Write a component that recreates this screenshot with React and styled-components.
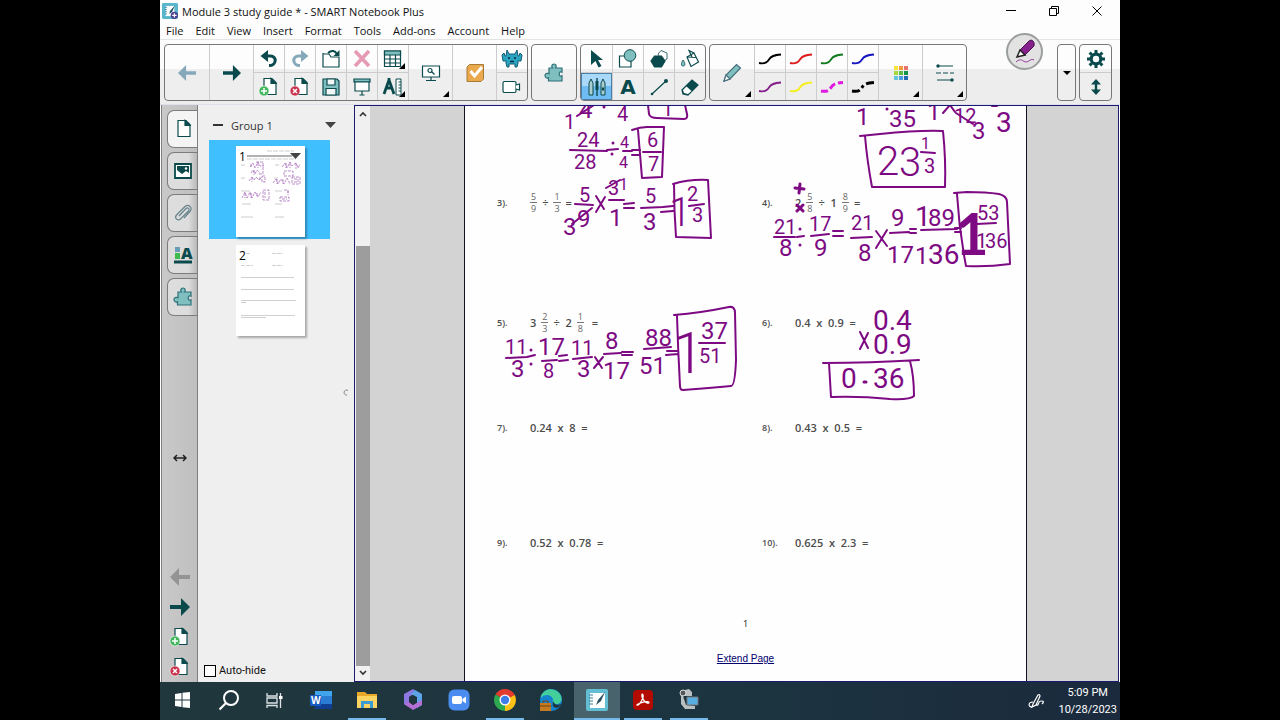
import React from 'react';
import styled, { createGlobalStyle, css } from 'styled-components';

const GlobalStyle = createGlobalStyle`
  * {
    box-sizing: border-box;
  }

  body {
    margin: 0;
    background: #000000;
    font-family: 'Open Sans', 'Noto Sans', sans-serif;
    font-size: 11px;
    color: #111111;
  }

  button {
    font: inherit;
    color: inherit;
    border: 0;
    padding: 0;
    background: none;
  }
`;

const Screen = styled.div`
  width: 75%;
  height: 100vh;
  margin: 0 auto;
  display: flex;
  flex-direction: column;
  background: #fdfdfd;
  overflow: hidden;
`;

const TitleBar = styled.header`
  display: flex;
  align-items: center;
  height: 22px;
  padding: 0 16px 0 2px;
  gap: 4px;
  flex: none;
`;

const Title = styled.h1`
  flex: 1;
  margin: 0;
  font-size: 11px;
  font-weight: 400;
  white-space: nowrap;
`;

const WindowButtons = styled.div`
  display: flex;
  gap: 28px;
`;

const WindowButton = styled.button`
  display: flex;
  width: 15px;
  height: 16px;
  align-items: center;
  justify-content: center;
`;

const MenuBar = styled.nav`
  display: flex;
  flex: none;
  height: 18px;
  padding-left: 6px;
  gap: 12px;
  border-bottom: 1px solid #e4e4e4;
`;

const MenuItem = styled.button`
  line-height: 17px;
  height: 17px;
`;

const Toolbar = styled.div`
  position: relative;
  display: flex;
  flex: none;
  gap: 3px;
  height: 65px;
  padding: 4px 8px 3px 4px;
  background: linear-gradient(#fcfcfc 29px, #ededed 29px);
  border-bottom: 1px solid #dedeee;
`;

const Group = styled.div`
  display: flex;
  border: 1px solid #777777;
  border-radius: 4px;
  background: linear-gradient(#fdfdfd 24px, #eeeeee 24px);
  overflow: hidden;
`;

const Pair = styled.div`
  display: flex;
  flex-direction: column;
  width: 31px;
  div + &,
  button + & {
    border-left: 1px solid #cccccc;
  }
`;

const ToolButton = styled.button`
  position: relative;
  display: flex;
  flex: 1;
  align-items: center;
  justify-content: center;
  & + & {
    border-top: 1px solid #cccccc;
  }
  ${(p) =>
    p.$active &&
    css`
      background: linear-gradient(#a9d8fa 50%, #6ebcf3 50%);
      box-shadow: inset 0 0 0 1px #4a7fa8;
    `}
`;

const WideButton = styled.button`
  position: relative;
  display: flex;
  width: 44px;
  align-items: center;
  justify-content: center;
  & + &,
  div + & {
    border-left: 1px solid #cccccc;
  }
`;

const Corner = styled.span`
  position: absolute;
  right: 3px;
  bottom: 3px;
  border: 3px solid #000000;
  border-top-color: transparent;
  border-left-color: transparent;
`;

const Spacer = styled.div`
  flex: 1;
`;

const Narrow = styled(WideButton)`
  width: 17px;
`;

const FloatingPen = styled.button`
  position: absolute;
  right: 77px;
  top: -7px;
  width: 37px;
  height: 37px;
  display: flex;
  align-items: center;
  justify-content: center;
  border: 2px solid #9b9f9c;
  border-radius: 50%;
  background: #e2e2e2;
`;

const Body = styled.main`
  display: flex;
  flex: 1;
  min-height: 0;
  padding: 0 1px;
`;

const Rail = styled.div`
  display: flex;
  flex-direction: column;
  align-items: flex-end;
  width: 37px;
  padding-top: 5px;
  background: linear-gradient(90deg, #c9c9c9, #bfbfbf);
  border: solid #808080;
  border-width: 0 1px;
`;

const Tab = styled.button`
  display: flex;
  align-items: center;
  justify-content: center;
  width: 30px;
  height: 38px;
  margin-bottom: 4px;
  border: 1px solid #7c7c7c;
  border-right: 0;
  border-radius: 7px 0 0 7px;
  background: ${(p) => (p.$active ? '#f4f4f4' : 'linear-gradient(90deg, #dddddd 70%, #b9b9b9)')};
`;

const RailButtons = styled.div`
  display: flex;
  flex-direction: column;
  width: 34px;
  margin-top: auto;
`;

const RailButton = styled.button`
  display: flex;
  align-items: center;
  justify-content: center;
  height: 30px;
`;

const Handle = styled(RailButton)`
  width: 34px;
  margin-top: 123px;
`;

const Sorter = styled.aside`
  position: relative;
  display: flex;
  flex-direction: column;
  width: 156px;
  background: #efefef;
`;

const GroupHeader = styled.div`
  display: flex;
  align-items: center;
  height: 35px;
  padding: 5px 18px 0 15px;
  gap: 8px;
  color: #333333;
  font-size: 11px;
  span {
    flex: 1;
  }
`;

const PageSlot = styled.button`
  display: block;
  width: 121px;
  height: 99px;
  margin-left: 11px;
  padding: 4px 0 0 27px;
  background: ${(p) => (p.$selected ? '#40bfff' : 'transparent')};
`;

const Thumb = styled.span`
  position: relative;
  display: block;
  width: 69px;
  height: 91px;
  background: #ffffff;
  box-shadow: 2px 2px 2px rgba(0, 0, 0, 0.3);
  svg {
    display: block;
  }
`;

const ThumbNumber = styled.span`
  position: absolute;
  left: 3px;
  top: 2px;
  font-size: 12px;
  color: #000000;
`;

const ThumbArrow = styled.span`
  position: absolute;
  right: 4px;
  top: 7px;
`;

const AutoHide = styled.label`
  display: flex;
  align-items: center;
  gap: 3px;
  margin-top: auto;
  padding: 0 0 5px 6px;
  font-family: Roboto, sans-serif;
  font-size: 11px;
  input {
    appearance: none;
    width: 12px;
    height: 12px;
    margin: 0;
    border: 1px solid #000000;
    background: #ffffff;
  }
`;

const Spinner = styled.svg`
  position: absolute;
  right: 5px;
  top: 284px;
`;

const Workspace = styled.section`
  display: flex;
  flex: 1;
  min-width: 0;
  background: #d3d3d3;
  border: 1px solid #1a1a70;
`;

const ScrollBar = styled.div`
  display: flex;
  flex-direction: column;
  align-items: center;
  width: 15px;
  padding: 5px 0 5px 1px;
  gap: 2px;
  background: #f0f0f0;
`;

const ScrollTrack = styled.div`
  flex: 1;
  width: 100%;
  padding: 127px 0 2px;
`;

const ScrollThumb = styled.div`
  height: 100%;
  background: #9d9d9d;
`;

const Sheet = styled.article`
  position: relative;
  flex: 1;
  margin: 0 91px 0 94px;
  background: #fefefe;
  border: solid #111122;
  border-width: 0 1px;
  overflow: hidden;
`;

const Problems = styled.div`
  display: grid;
  grid-template-columns: 265px 1fr;
  grid-template-rows: 120px 105px 115px 95px;
  padding: 76px 0 0 32px;
`;

const Problem = styled.div`
  display: flex;
  align-items: center;
  height: 40px;
  color: #4c4c4c;
  font-size: 11px;
  font-weight: 600;
`;

const Label = styled.span`
  width: 33px;
  font-size: 9px;
`;

const Expression = styled.span`
  display: flex;
  align-items: center;
  gap: 5px;
  white-space: pre;
`;

const Frac = styled.span`
  display: flex;
  flex-direction: column;
  align-items: center;
  font-size: 9px;
  line-height: 9px;
  color: #666666;
  b {
    font-weight: 400;
    padding: 0 1px 1px;
  }
  b + b {
    border-top: 1px solid #777777;
    padding: 1px 1px 0;
  }
`;

const PageNumber = styled.p`
  margin: 0;
  text-align: center;
  font-size: 9px;
  line-height: 14px;
`;

const ExtendPage = styled.a`
  display: block;
  width: fit-content;
  margin: 22px auto 0;
  font-family: 'Liberation Sans', Arial, sans-serif;
  font-size: 10px;
  color: #00006e;
`;

const InkLayer = styled.svg`
  position: absolute;
  left: 0;
  top: 0;
  width: 561px;
  height: 576px;
  fill: #7d0a82;
`;

const InkStroke = styled.path`
  fill: none;
  stroke: #7d0a82;
  stroke-width: ${(p) => (p.$heavy ? 3 : 2)};
  stroke-linecap: round;
  stroke-linejoin: round;
`;

const InkText = styled.text`
  font-family: ${(p) => (p.$bold ? 'Lato' : 'Roboto')}, sans-serif;
  font-size: ${(p) => p.$size}px;
  font-weight: ${(p) => (p.$bold ? 700 : p.$size > 28 ? 300 : 400)};
`;

const Taskbar = styled.footer`
  display: flex;
  flex: none;
  height: 38px;
  background: linear-gradient(90deg, #20373d, #1c3440 60%, #1b2a3d);
  color: #ffffff;
`;

const TaskButton = styled.button`
  display: flex;
  align-items: center;
  justify-content: center;
  width: 46px;
  background: ${(p) => (p.$active ? '#48636b' : 'transparent')};
  border-bottom: 2px solid transparent;
  ${(p) =>
    p.$open &&
    css`
      background-image: linear-gradient(#76b9ed, #76b9ed);
      background-size: ${p.$active ? '100%' : '38px'} 2px;
      background-position: center bottom;
      background-repeat: no-repeat;
      background-origin: border-box;
      background-clip: border-box;
    `}
`;

const Tray = styled.div`
  display: flex;
  align-items: center;
  gap: 14px;
  margin-left: auto;
  padding-right: 3px;
`;

const Clock = styled.time`
  text-align: center;
  font-family: Roboto, sans-serif;
  font-size: 11px;
  line-height: 17px;
`;

const DARK = '#0b4a4c';
const TEAL = '#7fbfc0';

function Icon({ size = 22, children }) {
  return (
    <svg width={size} height={size} viewBox="0 0 22 22" fill="none" stroke={DARK} strokeWidth="1.2" aria-hidden="true">
      {children}
    </svg>
  );
}

function Arrow({ color, left, size = 20 }) {
  return (
    <svg width={size} height={size} viewBox="0 0 20 20" fill={color} aria-hidden="true">
      <path d={left ? 'M0 10L9 1V8H20V12H9V19Z' : 'M20 10L11 1V8H0V12H11V19Z'} />
    </svg>
  );
}

function Caret({ w = 11, h = 6, color = '#444444' }) {
  return (
    <svg width={w} height={h} viewBox="0 0 10 6" preserveAspectRatio="none" aria-hidden="true">
      <path d="M0 0H10L5 6Z" fill={color} />
    </svg>
  );
}

function Puzzle({ size = 22 }) {
  return (
    <Icon size={size}>
      <path
        d="M6 6H9.500C8 4 9 2 11 2S14 4 12.500 6H19V10.200C17.400 9.300 16.200 10.200 16.200 12S17.400 14.800 19 13.800V19H5.500V15.800C3.800 16.600 2 15.600 2 13.600S3.800 10.800 6 11.600Z"
        fill={TEAL}
        stroke="#2c7078"
      />
    </Icon>
  );
}

function PageIcon({ badge }) {
  return (
    <Icon>
      <path d="M6 2.500H14L18 6.500V18.500H6Z" fill="#fff" />
      <path d="M13 2.500V7.500H18Z" fill={DARK} />
      {badge && (
        <>
          <circle cx="6" cy="15" r="5" fill={badge === 'add' ? '#3fb65b' : '#c8324a'} stroke="#fff" strokeWidth="0.600" />
          <path d={badge === 'add' ? 'M6 12V18M3 15H9' : 'M4 13L8 17M8 13L4 17'} stroke="#fff" strokeWidth="1.500" />
        </>
      )}
    </Icon>
  );
}

const Undo = ({ color, flip }) => (
  <Icon>
    <g transform={flip ? 'translate(22 0) scale(-1 1)' : undefined}>
      <path d="M7 8H12.500C19 8 19 17.500 11 17.500" stroke={color} strokeWidth="3" />
      <path d="M2.500 8L10 2V14Z" fill={color} stroke="none" />
    </g>
  </Icon>
);

const OpenIcon = () => (
  <Icon>
    <path d="M3 5V19H19V9H11L9 6H3" fill="#fff" />
    <path d="M8 5C12 1.500 15 3 17 6" strokeWidth="2" />
    <path d="M19.500 2V8H13.500Z" fill={DARK} stroke="none" />
  </Icon>
);

const TableIcon = () => (
  <Icon>
    <path d="M2.500 3H18.500V18.500H2.500Z" fill="#fff" />
    <path d="M2.500 3H18.500V7H2.500Z" fill={TEAL} />
    <path d="M2.500 11H18.500M2.500 15H18.500M8 7V18.500M13.500 7V18.500" />
  </Icon>
);

const SaveIcon = () => (
  <Icon>
    <path d="M3 3H17L19 5V19H3Z" fill={TEAL} />
    <path d="M7 3H15V9H7Z M6 12.500H16V19H6Z" fill="#f2f6f6" />
  </Icon>
);

const ScreenIcon = () => (
  <Icon>
    <path d="M3 3H19V6H3Z" fill={TEAL} />
    <path d="M4 6H18V15H4Z" fill="#fff" />
    <path d="M11 15V19M8.500 19H13.500" />
  </Icon>
);

const MeasureIcon = () => (
  <Icon>
    <path d="M7 2V5M7 4L2 18M7 4L12 18M4 12H10" strokeWidth="2.800" />
    <path d="M14 3H19V19H14ZM16.500 6H19M16.500 9H19M16.500 12H19M16.500 15H19" strokeWidth="1" fill="#fff" />
  </Icon>
);

const MonitorIcon = () => (
  <Icon>
    <path d="M2.500 4H19.500V15H2.500Z" fill="#fff" />
    <path d="M11 15V18.500M6 18.500H16" />
    <circle cx="10" cy="8.500" r="2" />
    <path d="M12 10L14.500 12.500" />
  </Icon>
);

const CheckIcon = () => (
  <Icon>
    <path d="M3 5L5.500 2.500H19.500V17L17 19.500H3Z" fill="#eaa94d" stroke="#a77b35" strokeWidth="1" />
    <path d="M6.500 9L10.500 14L18 5" stroke="#fff" strokeWidth="3" />
  </Icon>
);

const MonsterIcon = () => (
  <Icon>
    <path
      d="M6 2L8 6H14L16 2L17 8H18L19 5L21 7L20 13H17V15L16 19H14V16H8V19H6L5 15V13H2L1 7L3 5L4 8H5Z"
      fill="#2aa4c0"
      stroke="#145d73"
      strokeWidth="1"
    />
    <path d="M8 9V11M14 9V11M9 13.500H13" stroke="#0c2c44" strokeWidth="1.600" />
  </Icon>
);

const RecordIcon = () => (
  <Icon>
    <rect x="2" y="5.500" width="13" height="11" rx="1.500" fill="#fff" />
    <path d="M15 9L18.500 8V14L15 13" fill="#fff" />
  </Icon>
);

const SelectIcon = () => (
  <Icon>
    <path d="M5 2L17 12H12L15.500 18L12.500 19.500L9.500 13L5 17Z" fill={DARK} stroke="none" />
  </Icon>
);

const ShapesIcon = () => (
  <Icon>
    <path d="M2.500 8H14V19H2.500Z" fill="#fff" />
    <circle cx="13" cy="7.500" r="5.800" fill={TEAL} strokeWidth="1" />
  </Icon>
);

const PolygonIcon = () => (
  <Icon>
    <path d="M10 6L13 2.500L19 5L19 11L14 14Z" fill="#fff" strokeWidth="0.800" />
    <path d="M6.500 8H13.500L17 13L13.500 19H6.500L3 13Z" fill={DARK} />
  </Icon>
);

const FillIcon = () => (
  <Icon>
    <path d="M8 9L15 5L19.500 14L12 18.500Z" fill="#fff" />
    <path d="M8 9L17 9.500M13 9L10 2.500L15 5" />
    <path d="M4 12C1 17 3 18.500 4.500 18S7 16 4 12Z" fill={TEAL} strokeWidth="0.800" />
  </Icon>
);

const PensIcon = () => (
  <Icon>
    <path d="M3 7L5 3L7 7V19H3ZM15 7L17 3L19 7V19H15Z" fill="#a8cdd2" strokeWidth="1" />
    <path d="M11 2V20" strokeWidth="1.400" />
    <path d="M11 5V14M16 13H18" strokeWidth="3" />
  </Icon>
);

const LineIcon = () => (
  <Icon>
    <path d="M4 18L18 5" />
    <circle cx="18" cy="5" r="2" fill={DARK} stroke="none" />
    <circle cx="4" cy="18" r="1.300" fill={DARK} stroke="none" />
  </Icon>
);

const EraserIcon = () => (
  <Icon>
    <path d="M3 14L13 4L19 9L9 19L4 18Z" fill={DARK} />
    <path d="M4 14L7.500 10.500L12.500 15L9 18L5 17Z" fill="#fff" stroke="none" />
  </Icon>
);

const PencilIcon = () => (
  <Icon>
    <path d="M3 19L5 13L15.500 2.500L19.500 6L9 17Z" fill={TEAL} stroke="#476f7c" />
    <path d="M5 13L9 17L3 19Z" fill="#fff" stroke="#476f7c" />
  </Icon>
);

const PaletteIcon = () => {
  const colors = ['#f8e23b', '#f39a39', '#e8736c', '#a5d83b', '#58b947', '#119447', '#63c5da', '#4b9ce0', '#2469b4'];
  return (
    <Icon>
      {colors.map((c, i) => (
        <rect key={c} x={4 + (i % 3) * 5} y={4 + Math.floor(i / 3) * 5} width="4" height="4" fill={c} stroke="none" />
      ))}
    </Icon>
  );
};

const LineStyleIcon = () => (
  <Icon>
    <path d="M3 4H19M3 18H19" />
    <path d="M2 11H20" strokeDasharray="5 2" />
    <circle cx="4" cy="4" r="1.700" fill={DARK} stroke="none" />
    <circle cx="18" cy="18" r="1.700" fill={DARK} stroke="none" />
  </Icon>
);

const GearIcon = () => (
  <Icon>
    <circle cx="11" cy="11" r="4.800" strokeWidth="3.200" />
    {[0, 45, 90, 135, 180, 225, 270, 315].map((a) => (
      <path key={a} d="M11 5V2" strokeWidth="3" transform={`rotate(${a} 11 11)`} />
    ))}
  </Icon>
);

const MoveIcon = () => (
  <Icon>
    <path d="M11 6V16" strokeWidth="2.400" />
    <path d="M11 3L16 8.500H6ZM11 19L16 13.500H6Z" fill={DARK} stroke="none" />
  </Icon>
);

function PenLine({ color, dash, width = 1.8 }) {
  return (
    <svg width="24" height="14" viewBox="0 0 24 14" fill="none" aria-hidden="true">
      <path d="M1 11C6 12 9 11 11 7.500S16 3 23 2.500" stroke={color} strokeWidth={width} strokeDasharray={dash} />
    </svg>
  );
}

const AppIcon = ({ size = 16 }) => (
  <svg width={size} height={size} viewBox="0 0 22 22" aria-hidden="true">
    <rect width="22" height="22" rx="2" fill="#58b6cd" />
    <path d="M5 4H17V18H5Z" fill="#fff" />
    <path d="M4 6H7M4 9H7M4 12H7M4 15H7" stroke="#2e7f99" />
    <path d="M18 3L11 11L10 15L14 12Z" fill="#1d4a5e" />
    <circle cx="17" cy="17" r="5" fill="#4c3f8f" />
    <path d="M17 14V20M14 17H20" stroke="#fff" strokeWidth="1.500" />
  </svg>
);

const quickTools = [
  ['Undo', <Undo color={DARK} />, 'Add page', <PageIcon badge="add" />],
  ['Redo', <Undo color="#86a8bb" flip />, 'Delete page', <PageIcon badge="remove" />],
  ['Open', <OpenIcon />, 'Save', <SaveIcon />],
  ['Delete', <Icon><path d="M4 3L18 18M18 3L4 18" stroke="#e79ab4" strokeWidth="3.600" /></Icon>, 'Screen shade', <ScreenIcon />],
  ['Table', <TableIcon />, 'Measurement tools', <MeasureIcon />],
];

const drawTools = [
  ['Select', <SelectIcon />, 'Pens', <PensIcon />],
  ['Shapes', <ShapesIcon />, 'Text', null],
  ['Regular polygons', <PolygonIcon />, 'Lines', <LineIcon />],
  ['Fill', <FillIcon />, 'Eraser', <EraserIcon />],
];

const penLines = [
  [{ color: '#000000' }, { color: '#85208c' }],
  [{ color: '#dd1c1c' }, { color: '#f5ef24', width: 2 }],
  [{ color: '#107a1c' }, { color: '#e01be0', dash: '7 3', width: 3 }],
  [{ color: '#1515c4' }, { color: '#000000', dash: '8 3 3 3', width: 3 }],
];

const BoldA = styled.span`
  font-family: 'DejaVu Sans', sans-serif;
  font-size: 20px;
  font-weight: 700;
  line-height: 20px;
  color: ${DARK};
`;

const menus = ['File', 'Edit', 'View', 'Insert', 'Format', 'Tools', 'Add-ons', 'Account', 'Help'];

const Fraction = ({ top, bottom }) => (
  <Frac>
    <b>{top}</b>
    <b>{bottom}</b>
  </Frac>
);

const problems = [
  ['3).', <><Fraction top="5" bottom="9" />÷<Fraction top="1" bottom="3" />=</>],
  ['4).', <>2<Fraction top="5" bottom="8" />÷  1<Fraction top="8" bottom="9" />=</>],
  ['5).', <>3<Fraction top="2" bottom="3" />÷  2<Fraction top="1" bottom="8" /> =</>],
  ['6).', '0.4  x  0.9  ='],
  ['7).', '0.24  x  8  ='],
  ['8).', '0.43  x  0.5  ='],
  ['9).', '0.52  x  0.78  ='],
  ['10).', '0.625  x  2.3  ='],
];

// x, baseline, size, digits
const inkDigits = [
  [564, 129, 20, '1'], [579, 118, 24, '4'], [617, 121, 20, '4'], [662, 116, 20, '1'],
  [577, 147, 20, '24'], [574, 169, 20, '28'], [620, 148, 16, '4'], [619, 168, 16, '4'],
  [647, 147, 20, '6'], [648, 171, 20, '7'],
  [579, 202, 20, '5'], [577, 227, 24, '9'], [563, 235, 24, '3'], [608, 195, 20, '3'], [619, 190, 16, '1'],
  [609, 226, 24, '1'], [645, 203, 20, '5'], [643, 230, 24, '3'],
  [669, 226, 40, '1'], [687, 201, 20, '2'], [692, 222, 20, '3'],
  [856, 125, 24, '1'], [889, 127, 24, '35'], [927, 120, 24, '1'], [954, 123, 20, '12'], [972, 139, 24, '3'], [996, 132, 28, '3'],
  [877, 175, 40, '2'], [899, 176, 40, '3'], [921, 149, 16, '1'], [924, 173, 20, '3'],
  [774, 234, 20, '21'], [779, 256, 24, '8'], [809, 231, 20, '17'], [814, 256, 24, '9'],
  [851, 230, 20, '21'], [858, 261, 24, '8'], [891, 226, 24, '9'], [887, 263, 24, '17'],
  [915, 226, 28, '1'], [928, 226, 24, '89'], [915, 264, 24, '1'], [928, 264, 28, '36'],
  [977, 220, 20, '53'], [976, 248, 20, '1'], [985, 248, 20, '36'],
  [505, 354, 20, '11'], [511, 377, 24, '3'], [538, 355, 24, '17'], [543, 378, 20, '8'],
  [571, 355, 20, '11'], [577, 377, 24, '3'], [605, 349, 24, '8'], [603, 379, 24, '17'],
  [645, 346, 24, '88'], [639, 374, 24, '51'], [672, 373, 58, '1'], [701, 339, 24, '37'], [699, 363, 20, '51'],
  [873, 330, 28, '0.4'], [873, 354, 28, '0.9'], [841, 388, 28, '0'], [873, 388, 28, '36'],
];

const inkStrokes = [
  'M577 116L594 105M648 105L649 114Q650 118 657 118L684 119Q688 119 687 114L685 105',
  'M570 150L607 151M607 150L618 149M623 151H632M632 150H640M632 155H639',
  'M632 130Q640 127 647 127H664L662 177L642 178L638 130M643 152H661',
  'M575 204L593 205M572 224L592 208M596 196L604 209M605 197L596 212M606 188L620 180M609 200H624M624 204L634 203M624 208H634',
  'M641 208L663 207M663 207L673 206M661 212L673 211M673 184Q690 179 708 180L711 238L676 237Q674 210 674 184M689 206L704 204',
  'M943 113L950 105L955 112M956 113L973 124M992 106H997',
  'M860 136L880 134Q920 130 943 131Q946 160 945 187L872 187Q867 160 865 136M921 152L935 153',
  'M774 237H795M797 237L804 236M811 236L829 234M833 231H843M833 236H843M851 238L872 237',
  'M876 231L887 246M887 230L876 248M890 233L909 232M910 229H916M910 233H916M921 230L957 229M955 228H961M955 232H961',
  'M954 193L967 192Q986 192 999 194Q1007 196 1007 202L1010 264Q988 267 966 266Q959 230 957 194M977 224L996 223',
  'M506 358L527 357M527 357L535 355M542 361L557 360M559 356L567 355M559 361L568 360',
  'M573 359L592 357M595 357L602 368M603 357L594 368M604 354L621 353M622 352H633M622 355H632',
  'M644 349L671 347M667 351H678M666 355L678 354M674 315Q700 313 729 307Q735 306 735 313L736 360Q735 386 731 386Q710 388 683 390Q680 390 680 386Q678 350 677 316M699 343H725',
  'M860 332L868 348M868 333L860 349M823 363Q870 363 919 360M829 363L831 397Q860 396 890 399Q910 400 914 396Q914 376 910 361',
];

const heavyStrokes = [
  'M604 107V107M613 143V143M612 154V154M887 109V109M800 229V229M800 245V245M531 350V350M531 364V364',
  'M795 188L804 189M800 184L799 193M797 205L803 211M803 205L797 211M864 382H866',
];

function Ink() {
  return (
    <InkLayer viewBox="465 106 561 576" preserveAspectRatio="xMinYMin">
      {inkStrokes.map((d) => (
        <InkStroke key={d} d={d} />
      ))}
      {heavyStrokes.map((d) => (
        <InkStroke key={d} d={d} $heavy />
      ))}
      {inkDigits.map(([x, y, size, digits]) => (
        <InkText key={`${x}-${y}`} x={x} y={y} $size={size}>
          {digits}
        </InkText>
      ))}
      <InkText x={955} y={255} $size={58} $bold>
        1
      </InkText>
    </InkLayer>
  );
}

function ThumbOne() {
  return (
    <svg width="69" height="91" viewBox="0 0 69 91" fill="none" aria-hidden="true">
      <path d="M31 5H58M11 13H60" stroke="#cccccc" strokeDasharray="5 1" />
      <path d="M11 10H56" stroke="#999999" strokeWidth="1.500" />
      <path d="M5 19H9M39 19H43M5 32H9M38 32H42M5 45H14M39 45H46M6 58H15M39 58H46M5 71H17M39 71H48" stroke="#cccccc" />
      <g stroke="#a25fb5" strokeWidth="0.700" strokeDasharray="3 1">
        <path d="M14 21l3-4 2 5 3-6 2 4h4M15 27l2-3 2 4 2-4 3 3M13 35l3-4 2 3 2-3 3 3 2-3M20 16h7v12h-4M26 30h3v6h-3z" />
        <path d="M46 21l3-4 2 5 3-6 2 4 4-3 2 5 2-4M48 25h9v5h-9zM37 37l3-4 2 5 3-5 3 5 3-6 3 6M56 31h8v7h-8z" />
        <path d="M6 52l3-6 2 6 3-6 2 6 3-6 3 5 3-5M27 44h6v10h-6zM48 44h4v5M44 51h9v4h-9zM51 46h2" />
        <path d="M15 18v4M18 24v5M22 17v5M16 31v5M24 31v4M50 17v5M54 17v5M60 17v6M58 33h4v3h-4M41 33v5M47 33v5M9 47v5M15 47v5M21 47v4M29 46v6M46 53h5" />
      </g>
    </svg>
  );
}

function ThumbTwo() {
  return (
    <svg width="69" height="91" viewBox="0 0 69 91" fill="none" stroke="#d0d0d0" aria-hidden="true">
      <path d="M10 8.500H15M36 8.500H47M5 20.500H17M36 20.500H47" strokeDasharray="4 1" />
      <path d="M5 32.500H58M5 44.500H58M5 55.500H60M5 57.500H10M5 70.500H59M5 72.500H30" />
    </svg>
  );
}

const TaskIcon = ({ children }) => (
  <svg width="24" height="24" viewBox="0 0 24 24" fill="none" aria-hidden="true">
    {children}
  </svg>
);

const tasks = [
  { name: 'Start', icon: <path d="M4 6L10.500 5V11.500H4ZM11.500 4.800L19 4V11.500H11.500ZM4 12.500H10.500V19L4 18ZM11.500 12.500H19V20L11.500 19.200Z" fill="#fff" /> },
  { name: 'Search', icon: <><circle cx="14" cy="10" r="7" stroke="#fff" strokeWidth="2" /><path d="M9 15L2.500 21.500" stroke="#fff" strokeWidth="2.200" /></> },
  { name: 'Task view', icon: <><path d="M4 5V8H14V5M4 10H14V15H4ZM4 20V17.500H14V20M17.500 5V20" stroke="#dce4e5" strokeWidth="1.300" /><path d="M16 8H19.500V11H16Z" fill="#fff" /></> },
  {
    name: 'Word',
    icon: (
      <>
        <path d="M6 3H23V21H6Z" fill="#2b7cd3" />
        <path d="M6 3H23V8H6Z" fill="#41a5ee" />
        <path d="M6 16H23V21H6Z" fill="#103f91" />
        <path d="M1 7H12V18H1Z" fill="#185abd" />
        <text x="2" y="16" fontSize="10" fontWeight="700" fill="#fff">W</text>
      </>
    ),
  },
  { name: 'File Explorer', open: true, icon: <><path d="M2 4H10L12 6H22V20H2Z" fill="#e9a928" /><path d="M2 8H22V20H2Z" fill="#fcd462" /><path d="M6 20V13H18V20H15V16H9V20Z" fill="#3d9bd4" /></> },
  {
    name: 'Microsoft 365',
    icon: (
      <>
        <path d="M12 1L3 6V16L8 19V9L16 4Z" fill="#8b78e0" />
        <path d="M14 2L21 6V17L16 20V10L10 6Z" fill="#5ba4e8" />
        <path d="M3 16L12 22L21 17V12L12 17L8 14Z" fill="#b36fd4" />
        <path d="M12 7L16 9V14L12 17L8 14V9Z" fill="#20363f" />
      </>
    ),
  },
  { name: 'Zoom', icon: <><rect x="1.500" y="1.500" width="21" height="21" rx="6" fill="#4a8cf0" /><rect x="5" y="8" width="10" height="8" rx="2" fill="#fff" /><path d="M15.500 11L19 8.500V15.500L15.500 13Z" fill="#fff" /></> },
  {
    name: 'Chrome',
    open: true,
    icon: (
      <>
        <path d="M12 12L2.500 6.500A11 11 0 0 1 21.500 6.500Z" fill="#e33b2e" />
        <path d="M12 12L21.500 6.500A11 11 0 0 1 12 23Z" fill="#fbc116" />
        <path d="M12 12L12 23A11 11 0 0 1 2.500 6.500Z" fill="#2da94f" />
        <path d="M12 7H21.800L12 12Z" fill="#e33b2e" />
        <circle cx="12" cy="12" r="5.500" fill="#fff" />
        <circle cx="12" cy="12" r="4.200" fill="#3f7de8" />
      </>
    ),
  },
  {
    name: 'Edge',
    icon: (
      <>
        <circle cx="12" cy="12" r="11" fill="#1683cf" />
        <path d="M2 8C5 1 13 -1 19 4C25 9 23 17 16 16C13 16 14 13 14 11C12 6 5 6 2 10Z" fill="#43cf9b" />
        <path d="M14 11C15 15 11 19 18 20C21 18 22 17 22 16C18 18 14 16 14 11Z" fill="#20363f" />
        <path d="M1 15H12V23H1Z" fill="#c57b21" />
        <path d="M4 15V13H9V15M1 18H12" stroke="#744411" />
      </>
    ),
  },
  { name: 'SMART Notebook', open: true, active: true, icon: <><rect x="1" y="1" width="22" height="22" rx="2" fill="#63bdd3" /><path d="M5 5H20V20H5Z" fill="#fff" /><path d="M4 7H8M4 10H8M4 13H8M4 16H8" stroke="#397f96" /><path d="M20 4L13 12L11 17L16 13Z" fill="#284f60" /></> },
  { name: 'Acrobat', open: true, icon: <><rect x="2" y="2" width="20" height="20" rx="4" fill="#b30b00" /><path d="M6 17C8 18 13 10 12 7C11 5 10 7 12 11C14 15 18 16 18 14.500S10 13.500 6.500 16.500Z" stroke="#fff" strokeWidth="1.300" /></> },
  { name: 'Camera', open: true, icon: <><path d="M4 3L12 1L15 4V8H6L9 17L18 18V21H8L4 16Z" fill="#b9bec0" /><circle cx="6" cy="5" r="3" fill="#52585b" stroke="#ddd" /><path d="M10 9H21V17H10Z" fill="#57aee0" stroke="#777" /></> },
];

export default function App() {
  return (
    <>
      <GlobalStyle />
      <Screen>
        <TitleBar>
          <AppIcon />
          <Title>Module 3 study guide * - SMART Notebook Plus</Title>
          <WindowButtons>
            <WindowButton aria-label="Minimize">
              <svg width="10" height="10" stroke="#000"><path d="M0 4.500H10" /></svg>
            </WindowButton>
            <WindowButton aria-label="Restore">
              <svg width="10" height="10" stroke="#000" fill="none"><path d="M0.500 2.500H7.500V9.500H0.500ZM2.500 2.500V0.500H9.500V7.500H7.500" /></svg>
            </WindowButton>
            <WindowButton aria-label="Close">
              <svg width="10" height="10" stroke="#000"><path d="M0.500 0.500L9.500 9.500M9.500 0.500L0.500 9.500" /></svg>
            </WindowButton>
          </WindowButtons>
        </TitleBar>
        <MenuBar>
          {menus.map((m) => (
            <MenuItem key={m}>{m}</MenuItem>
          ))}
        </MenuBar>
        <Toolbar>
          <Group>
            <WideButton aria-label="Previous page"><Arrow left color="#86a8bb" size={18} /></WideButton>
            <WideButton aria-label="Next page"><Arrow color={DARK} size={18} /></WideButton>
            {quickTools.map(([a, iconA, b, iconB]) => (
              <Pair key={a}>
                <ToolButton aria-label={a}>{iconA}{a === 'Table' && <Corner />}</ToolButton>
                <ToolButton aria-label={b}>{iconB}{a === 'Table' && <Corner />}</ToolButton>
              </Pair>
            ))}
            <WideButton aria-label="View screens"><MonitorIcon /><Corner /></WideButton>
            <WideButton aria-label="Response"><CheckIcon /></WideButton>
            <Pair>
              <ToolButton aria-label="Lab activities"><MonsterIcon /></ToolButton>
              <ToolButton aria-label="Recorder"><RecordIcon /></ToolButton>
            </Pair>
          </Group>
          <Group>
            <WideButton aria-label="Add-ons"><Puzzle /></WideButton>
          </Group>
          <Group>
            {drawTools.map(([a, iconA, b, iconB]) => (
              <Pair key={a}>
                <ToolButton aria-label={a}>{iconA}</ToolButton>
                <ToolButton aria-label={b} $active={b === 'Pens'}>{iconB || <BoldA>A</BoldA>}</ToolButton>
              </Pair>
            ))}
          </Group>
          <Group>
            <WideButton aria-label="Pen type"><PencilIcon /><Corner /></WideButton>
            {penLines.map(([a, b]) => (
              <Pair key={a.color}>
                <ToolButton aria-label={`Pen ${a.color}`}><PenLine {...a} /></ToolButton>
                <ToolButton aria-label={`Pen style ${b.color}`}><PenLine {...b} /></ToolButton>
              </Pair>
            ))}
            <WideButton aria-label="Colors"><PaletteIcon /><Corner /></WideButton>
            <WideButton aria-label="Line style"><LineStyleIcon /><Corner /></WideButton>
          </Group>
          <Spacer />
          <Group>
            <Narrow aria-label="More tools"><Caret w={8} h={4} color="#000000" /></Narrow>
          </Group>
          <Group>
            <Pair>
              <ToolButton aria-label="Settings"><GearIcon /></ToolButton>
              <ToolButton aria-label="Move toolbar"><MoveIcon /></ToolButton>
            </Pair>
          </Group>
          <FloatingPen aria-label="Active pen">
            <svg width="24" height="28" viewBox="0 0 24 28" fill="none" aria-hidden="true">
              <path d="M7 12L16 3Q18 1 20 3T21 8L12 17Z" fill="#86208c" stroke="#4b1250" />
              <path d="M7 12L12 17L4 19Z" fill="#fff" stroke="#222" strokeWidth="1.500" />
              <path d="M3 24C8 19 10 24 13 24S18 20 21 22" stroke="#9a3fa0" />
            </svg>
          </FloatingPen>
        </Toolbar>
        <Body>
          <Rail>
            <Tab $active aria-label="Page sorter"><PageIcon /></Tab>
            <Tab aria-label="Gallery">
              <Icon>
                <path d="M3 4H19V18H3Z" fill="#fff" strokeWidth="1.800" />
                <path d="M5 6H17V13L14 11L10 14L5 10Z" fill={DARK} stroke="none" />
                <circle cx="14" cy="8.500" r="1.200" fill="#fff" stroke="none" />
              </Icon>
            </Tab>
            <Tab aria-label="Attachments">
              <Icon>
                <path d="M7 14L14 6.500C16 5 18 7 16.500 9L8.500 17C5.500 19.500 2 16 4.500 13L13 4.500C16.500 1.500 21 5.500 18 9.500L12 16" stroke="#66838c" />
              </Icon>
            </Tab>
            <Tab aria-label="Properties">
              <Icon>
                <path d="M3 3H8V8H3Z" fill="#6b9bb5" stroke="none" />
                <path d="M3 9H8V15H3Z" fill="#3dbb4d" stroke="none" />
                <path d="M2 18H20" strokeWidth="3" />
                <text x="9" y="15" fontSize="16" fontWeight="800" fill={DARK} stroke="none">A</text>
              </Icon>
            </Tab>
            <Tab aria-label="Add-ons panel"><Puzzle /></Tab>
            <Handle aria-label="Resize panel">
              <svg width="14" height="10" viewBox="0 0 14 10" fill="none" stroke="#222" strokeWidth="1.500"><path d="M1 5H13M4 2L1 5L4 8M10 2L13 5L10 8" /></svg>
            </Handle>
            <RailButtons>
              <RailButton aria-label="Previous"><Arrow left color="#949494" /></RailButton>
              <RailButton aria-label="Next"><Arrow color={DARK} /></RailButton>
              <RailButton aria-label="New page"><PageIcon badge="add" /></RailButton>
              <RailButton aria-label="Remove page"><PageIcon badge="remove" /></RailButton>
            </RailButtons>
          </Rail>
          <Sorter>
            <GroupHeader>
              <svg width="10" height="2"><path d="M0 1H10" stroke="#333" strokeWidth="2" /></svg>
              <span>Group 1</span>
              <Caret />
            </GroupHeader>
            <PageSlot $selected aria-label="Page 1">
              <Thumb>
                <ThumbOne />
                <ThumbNumber>1</ThumbNumber>
                <ThumbArrow><Caret /></ThumbArrow>
              </Thumb>
            </PageSlot>
            <PageSlot aria-label="Page 2">
              <Thumb>
                <ThumbTwo />
                <ThumbNumber>2</ThumbNumber>
              </Thumb>
            </PageSlot>
            <AutoHide>
              <input type="checkbox" />
              Auto-hide
            </AutoHide>
            <Spinner width="6" height="8" fill="none" stroke="#888888"><path d="M5 1.500A2.500 2.500 0 1 0 4 6" /></Spinner>
          </Sorter>
          <Workspace>
            <ScrollBar>
              <svg width="8" height="6" fill="none" stroke="#333" strokeWidth="1.600"><path d="M1 5L4 2L7 5" /></svg>
              <ScrollTrack>
                <ScrollThumb />
              </ScrollTrack>
              <svg width="8" height="6" fill="none" stroke="#333" strokeWidth="1.600"><path d="M1 1L4 4L7 1" /></svg>
            </ScrollBar>
            <Sheet>
              <Problems>
                {problems.map(([label, body]) => (
                  <Problem key={label}>
                    <Label>{label}</Label>
                    <Expression>{body}</Expression>
                  </Problem>
                ))}
              </Problems>
              <PageNumber>1</PageNumber>
              <ExtendPage href="#extend">Extend Page</ExtendPage>
              <Ink />
            </Sheet>
          </Workspace>
        </Body>
        <Taskbar>
          {tasks.map((t) => (
            <TaskButton key={t.name} aria-label={t.name} $open={t.open} $active={t.active}>
              <TaskIcon>{t.icon}</TaskIcon>
            </TaskButton>
          ))}
          <Tray>
            <svg width="16" height="16" viewBox="0 0 16 16" fill="none" stroke="#fff" strokeWidth="1.200" aria-hidden="true">
              <path d="M5 11L10 2Q12 1 12 3L8 12L4 14ZM5 9C0 9 0 14 4 14M8 12C12 13 9 8 13 8S15 10 14 11" />
            </svg>
            <Clock>
              5:09 PM
              <br />
              10/28/2023
            </Clock>
          </Tray>
        </Taskbar>
      </Screen>
    </>
  );
}
